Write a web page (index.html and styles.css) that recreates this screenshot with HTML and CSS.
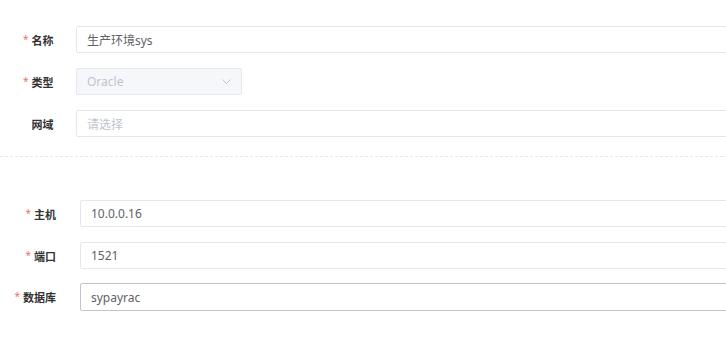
FILE: index.html
```html
<!DOCTYPE html>
<html lang="zh-CN">
<head>
<meta charset="utf-8">
<title>数据源</title>
<link rel="stylesheet" href="styles.css">
</head>
<body>
<div class="page">
  <section class="form form-basic">
    <div class="row">
      <label class="label"><span class="star">*</span>名称</label>
      <div class="input"><span class="value">生产环境sys</span></div>
    </div>
    <div class="row">
      <label class="label"><span class="star">*</span>类型</label>
      <div class="select disabled">
        <span class="placeholder">Oracle</span>
        <svg class="chevron" width="9" height="5" viewBox="0 0 9 5"><path d="M0.5 0.5 L4.5 4.5 L8.5 0.5" fill="none" stroke="#c0c4cc" stroke-width="1"/></svg>
      </div>
    </div>
    <div class="row">
      <label class="label"><span class="star hidden">*</span>网域</label>
      <div class="input"><span class="placeholder">请选择</span></div>
    </div>
  </section>
  <div class="divider"></div>
  <section class="form form-conn">
    <div class="row">
      <label class="label"><span class="star">*</span>主机</label>
      <div class="input"><span class="value">10.0.0.16</span></div>
    </div>
    <div class="row">
      <label class="label"><span class="star">*</span>端口</label>
      <div class="input"><span class="value">1521</span></div>
    </div>
    <div class="row row-db">
      <label class="label"><span class="star">*</span>数据库</label>
      <div class="input hover"><span class="value">sypayrac</span></div>
    </div>
  </section>
</div>
</body>
</html>
```

FILE: styles.css
```css
* { box-sizing: border-box; }
html, body {
  margin: 0;
  padding: 0;
  background: #ffffff;
  overflow: hidden;
}
body {
  font-family: "Noto Sans", "Noto Sans CJK SC", sans-serif;
  font-size: 12px;
  color: #606266;
}
.page {
  width: 760px;
}
.form {
  display: flex;
  flex-direction: column;
  gap: 15px;
}
.form-basic {
  padding-top: 26px;
}
.row {
  display: flex;
  align-items: center;
  height: 27px;
}
.label {
  font-weight: bold;
  color: #333333;
  font-size: 11px;
  display: flex;
  align-items: center;
  flex: none;
}
.star {
  color: #f56c6c;
  font-weight: normal;
  margin-right: 3px;
  font-size: 10px;
  position: relative;
  top: -1px;
}
.star.hidden { visibility: hidden; }
.form-basic .label {
  width: 76px;
  padding-left: 23px;
}
.input, .select {
  height: 100%;
  border: 1px solid #e4e7ed;
  border-radius: 2px;
  display: flex;
  align-items: center;
  padding: 0 10px;
  background: #fff;
}
.input { flex: 1; }
.row-db { height: 28px; margin-top: -1px; }
.input.hover { border-color: #c0c4cc; }
.select {
  width: 166px;
  justify-content: space-between;
}
.select.disabled {
  background: #f5f7fa;
  border-color: #e4e7ed;
}
.value { color: #606266; }
.placeholder { color: #c0c4cc; }
.divider {
  height: 1px;
  margin-top: 19px;
  background: repeating-linear-gradient(to right, #e4e7ed 0 3px, transparent 3px 5px);
}
.form-conn {
  padding-top: 43px;
}
.form-conn .label {
  width: 80px;
  justify-content: flex-end;
  padding-right: 24px;
}
```
